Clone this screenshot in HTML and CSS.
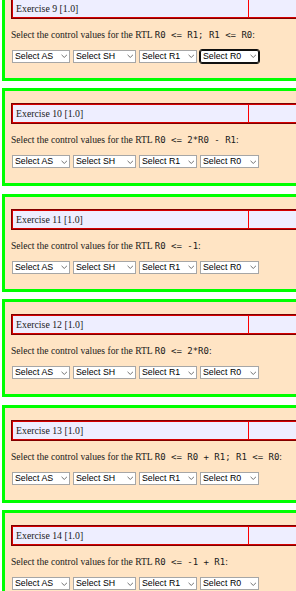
FILE: index.html
```html
<!DOCTYPE html>
<html>
<head>
<meta charset="utf-8">
<link rel="stylesheet" href="styles.css">
</head>
<body>
<div class="page">
  <div class="ex">
    <table class="hdr"><tr><td class="title">Exercise 9 [1.0]</td><td class="side"></td></tr></table>
    <p class="q">Select the control values for the RTL <code>R0 &lt;= R1; R1 &lt;= R0</code>:</p>
    <div class="sels">
      <span class="sel s-as"><select><option>Select AS</option></select><svg class="chev" viewBox="0 0 6 4"><path d="M0.5 0.8 L3 3.2 L5.5 0.8"/></svg></span>
      <span class="sel s-sh"><select><option>Select SH</option></select><svg class="chev" viewBox="0 0 6 4"><path d="M0.5 0.8 L3 3.2 L5.5 0.8"/></svg></span>
      <span class="sel s-r1"><select><option>Select R1</option></select><svg class="chev" viewBox="0 0 6 4"><path d="M0.5 0.8 L3 3.2 L5.5 0.8"/></svg></span>
      <span class="sel s-r0"><select class="focus"><option>Select R0</option></select><svg class="chev" viewBox="0 0 6 4"><path d="M0.5 0.8 L3 3.2 L5.5 0.8"/></svg></span>
    </div>
  </div>
  <div class="ex">
    <table class="hdr"><tr><td class="title">Exercise 10 [1.0]</td><td class="side"></td></tr></table>
    <p class="q">Select the control values for the RTL <code>R0 &lt;= 2*R0 - R1</code>:</p>
    <div class="sels">
      <span class="sel s-as"><select><option>Select AS</option></select><svg class="chev" viewBox="0 0 6 4"><path d="M0.5 0.8 L3 3.2 L5.5 0.8"/></svg></span>
      <span class="sel s-sh"><select><option>Select SH</option></select><svg class="chev" viewBox="0 0 6 4"><path d="M0.5 0.8 L3 3.2 L5.5 0.8"/></svg></span>
      <span class="sel s-r1"><select><option>Select R1</option></select><svg class="chev" viewBox="0 0 6 4"><path d="M0.5 0.8 L3 3.2 L5.5 0.8"/></svg></span>
      <span class="sel s-r0"><select><option>Select R0</option></select><svg class="chev" viewBox="0 0 6 4"><path d="M0.5 0.8 L3 3.2 L5.5 0.8"/></svg></span>
    </div>
  </div>
  <div class="ex">
    <table class="hdr"><tr><td class="title">Exercise 11 [1.0]</td><td class="side"></td></tr></table>
    <p class="q">Select the control values for the RTL <code>R0 &lt;= -1</code>:</p>
    <div class="sels">
      <span class="sel s-as"><select><option>Select AS</option></select><svg class="chev" viewBox="0 0 6 4"><path d="M0.5 0.8 L3 3.2 L5.5 0.8"/></svg></span>
      <span class="sel s-sh"><select><option>Select SH</option></select><svg class="chev" viewBox="0 0 6 4"><path d="M0.5 0.8 L3 3.2 L5.5 0.8"/></svg></span>
      <span class="sel s-r1"><select><option>Select R1</option></select><svg class="chev" viewBox="0 0 6 4"><path d="M0.5 0.8 L3 3.2 L5.5 0.8"/></svg></span>
      <span class="sel s-r0"><select><option>Select R0</option></select><svg class="chev" viewBox="0 0 6 4"><path d="M0.5 0.8 L3 3.2 L5.5 0.8"/></svg></span>
    </div>
  </div>
  <div class="ex">
    <table class="hdr"><tr><td class="title">Exercise 12 [1.0]</td><td class="side"></td></tr></table>
    <p class="q">Select the control values for the RTL <code>R0 &lt;= 2*R0</code>:</p>
    <div class="sels">
      <span class="sel s-as"><select><option>Select AS</option></select><svg class="chev" viewBox="0 0 6 4"><path d="M0.5 0.8 L3 3.2 L5.5 0.8"/></svg></span>
      <span class="sel s-sh"><select><option>Select SH</option></select><svg class="chev" viewBox="0 0 6 4"><path d="M0.5 0.8 L3 3.2 L5.5 0.8"/></svg></span>
      <span class="sel s-r1"><select><option>Select R1</option></select><svg class="chev" viewBox="0 0 6 4"><path d="M0.5 0.8 L3 3.2 L5.5 0.8"/></svg></span>
      <span class="sel s-r0"><select><option>Select R0</option></select><svg class="chev" viewBox="0 0 6 4"><path d="M0.5 0.8 L3 3.2 L5.5 0.8"/></svg></span>
    </div>
  </div>
  <div class="ex">
    <table class="hdr"><tr><td class="title">Exercise 13 [1.0]</td><td class="side"></td></tr></table>
    <p class="q">Select the control values for the RTL <code>R0 &lt;= R0 + R1; R1 &lt;= R0</code>:</p>
    <div class="sels">
      <span class="sel s-as"><select><option>Select AS</option></select><svg class="chev" viewBox="0 0 6 4"><path d="M0.5 0.8 L3 3.2 L5.5 0.8"/></svg></span>
      <span class="sel s-sh"><select><option>Select SH</option></select><svg class="chev" viewBox="0 0 6 4"><path d="M0.5 0.8 L3 3.2 L5.5 0.8"/></svg></span>
      <span class="sel s-r1"><select><option>Select R1</option></select><svg class="chev" viewBox="0 0 6 4"><path d="M0.5 0.8 L3 3.2 L5.5 0.8"/></svg></span>
      <span class="sel s-r0"><select><option>Select R0</option></select><svg class="chev" viewBox="0 0 6 4"><path d="M0.5 0.8 L3 3.2 L5.5 0.8"/></svg></span>
    </div>
  </div>
  <div class="ex">
    <table class="hdr"><tr><td class="title">Exercise 14 [1.0]</td><td class="side"></td></tr></table>
    <p class="q">Select the control values for the RTL <code>R0 &lt;= -1 + R1</code>:</p>
    <div class="sels">
      <span class="sel s-as"><select><option>Select AS</option></select><svg class="chev" viewBox="0 0 6 4"><path d="M0.5 0.8 L3 3.2 L5.5 0.8"/></svg></span>
      <span class="sel s-sh"><select><option>Select SH</option></select><svg class="chev" viewBox="0 0 6 4"><path d="M0.5 0.8 L3 3.2 L5.5 0.8"/></svg></span>
      <span class="sel s-r1"><select><option>Select R1</option></select><svg class="chev" viewBox="0 0 6 4"><path d="M0.5 0.8 L3 3.2 L5.5 0.8"/></svg></span>
      <span class="sel s-r0"><select><option>Select R0</option></select><svg class="chev" viewBox="0 0 6 4"><path d="M0.5 0.8 L3 3.2 L5.5 0.8"/></svg></span>
    </div>
  </div>
</div>
</body>
</html>
```
FILE: styles.css
```css
html {
  overflow: hidden;
  background: #ffffff;
}
body {
  margin: 0;
  font-family: "Liberation Serif", "Times New Roman", serif;
  font-size: 9.6px;
  color: #1a1a1a;
}
.page {
  padding-left: 2px;
  margin-top: -17.5px;
  overflow: hidden;
  width: 294px;
}
.ex {
  width: 340px;
  box-sizing: border-box;
  background: #ffe4c4;
  border: 3px solid #00ff00;
  padding: 12px 6px 15px;
  margin-bottom: 7.5px;
}
.hdr {
  width: 330px;
  border-collapse: separate;
  border-spacing: 0;
  border: 1px solid #800000;
  background: #eeeeff;
}
.hdr td {
  height: 17px;
  padding: 0 3px;
  border-top: 1px solid #d40000;
  border-bottom: 1px solid #d40000;
  line-height: 11px;
  font-size: 9.8px;
  vertical-align: middle;
}
.hdr .title {
  width: 229px;
  border-left: 1px solid #d40000;
  border-right: 1px solid #ff0000;
}
.hdr .side {
  border-right: 1px solid #d40000;
}
.q {
  margin: 10px 0 9px;
  line-height: 12px;
  white-space: nowrap;
}
.q code {
  font-family: "DejaVu Sans Mono", "Liberation Mono", monospace;
  font-size: 9px;
}
.sels {
  display: flex;
  gap: 3px;
  padding-left: 1px;
}
.sel {
  position: relative;
  display: flex;
  height: 13px;
}
.sel select {
  -webkit-appearance: none;
  appearance: none;
  width: 100%;
  height: 13px;
  box-sizing: border-box;
  font-family: "Liberation Sans", Arial, sans-serif;
  font-size: 8.8px;
  line-height: 11px;
  color: #000;
  background-color: #ffffff;
  border: 1px solid #a6a6a6;
  border-radius: 0;
  padding: 0 0 0 2px;
  margin: 0;
}
.chev {
  position: absolute;
  right: 2.5px;
  top: 4.5px;
  width: 6.5px;
  height: 4.3px;
  fill: none;
  stroke: #5a5a5a;
  stroke-width: 0.8;
  pointer-events: none;
}
.s-as { width: 58px; }
.s-sh { width: 63px; }
.s-r1 { width: 58px; }
.s-r0 { width: 59px; }
.sel select.focus {
  border-color: #101010;
  outline: 1px solid #101010;
  border-radius: 2px;
}
```
